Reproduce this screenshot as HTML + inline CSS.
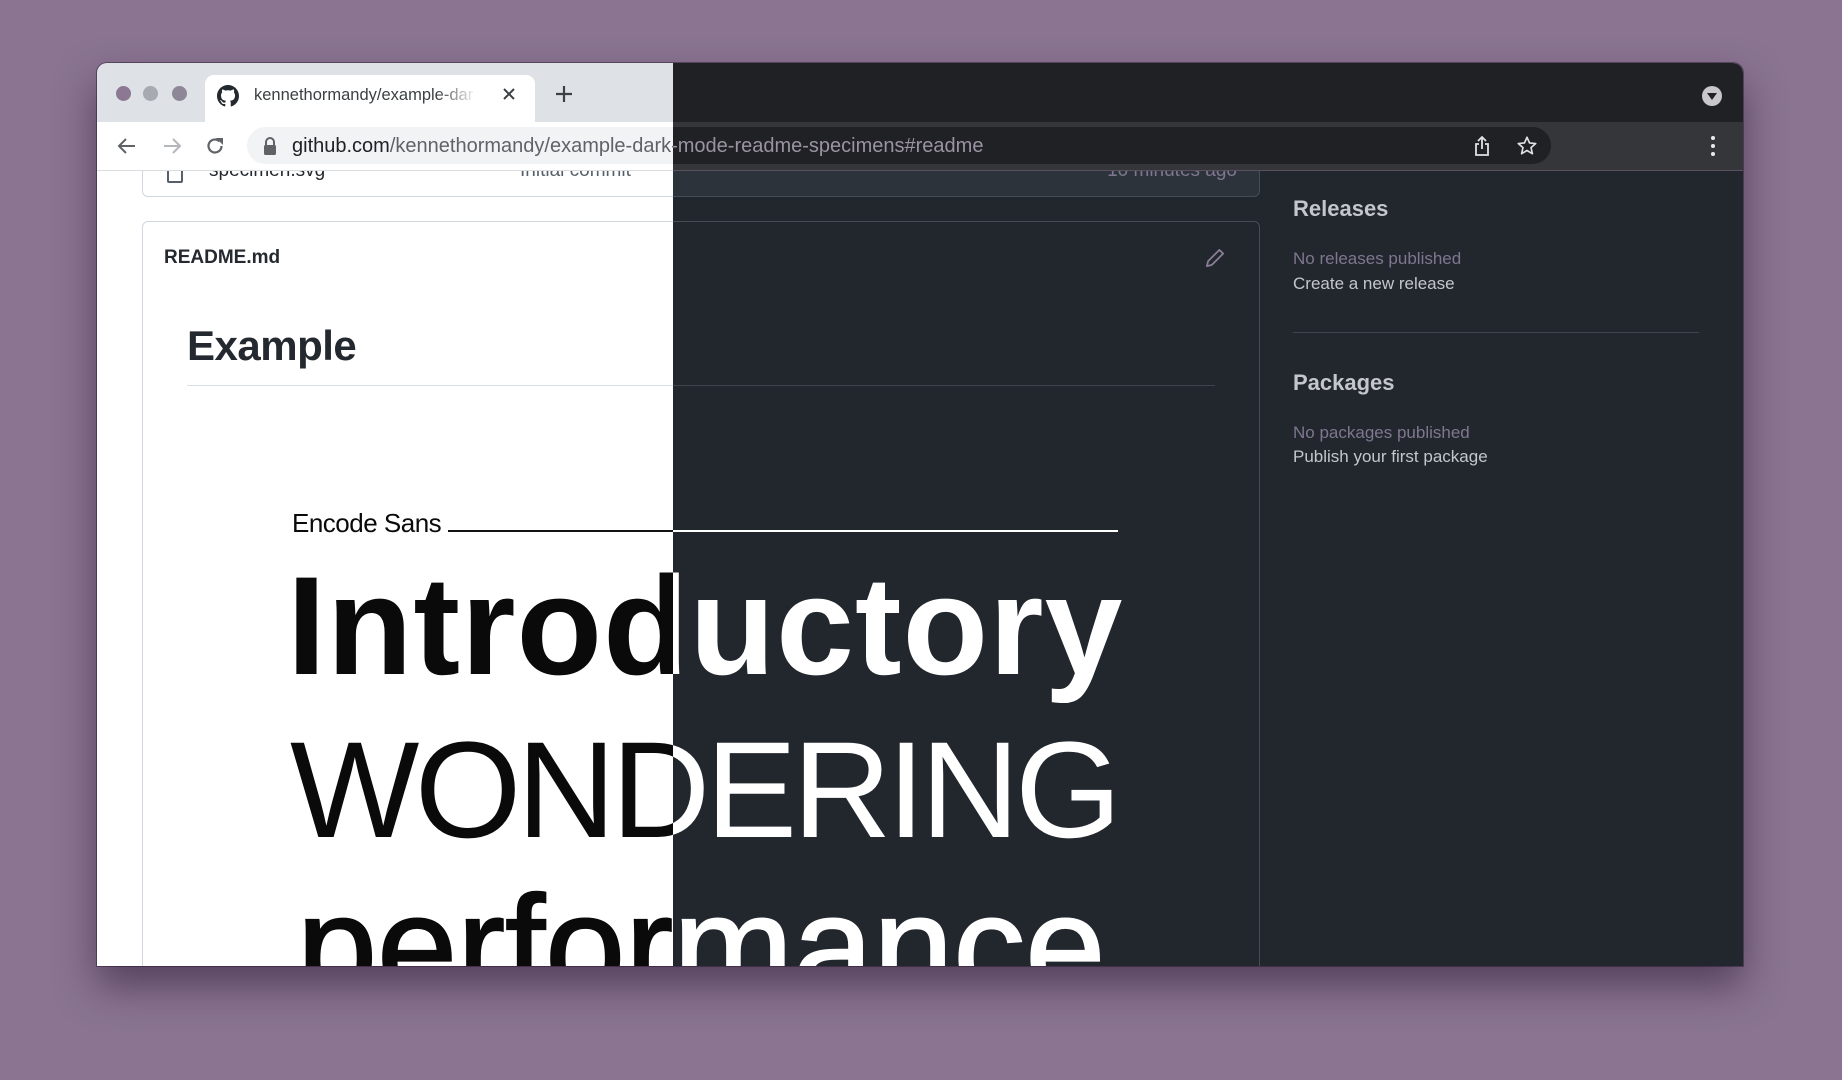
<!DOCTYPE html>
<html><head><meta charset="utf-8"><style>
*{margin:0;padding:0;box-sizing:border-box}
body{width:1842px;height:1080px;background:#8a7491;overflow:hidden;font-family:"Liberation Sans",sans-serif;position:relative}
#win{position:absolute;left:97px;top:63px;width:1646px;height:903px;border-radius:10px 10px 0 0;overflow:hidden;box-shadow:0 20px 40px rgba(40,20,50,.55),0 0 0 1px rgba(40,30,50,.5)}
.layer{position:absolute;left:0;top:0;width:1646px;height:903px;overflow:hidden}
.dark{clip-path:inset(0 0 0 576px)}
.abs{position:absolute;white-space:nowrap}
.tabbar{left:0;top:0;width:1646px;height:59px}
.toolbar{left:0;top:59px;width:1646px;height:49px}
.content{left:0;top:108px;width:1646px;height:795px;overflow:hidden}
.light .tabbar{background:#dee1e6}.dark .tabbar{background:#202124}
.light .toolbar{background:#fff;border-bottom:1px solid #dadce0}.dark .toolbar{background:#35363a;border-bottom:1px solid #5a5060}
.light .content{background:#fff}.dark .content{background:#22272e}
.omni{left:150px;top:5px;width:1304px;height:37px;border-radius:19px}
.light .omni{background:#f1f3f4}.dark .omni{background:#202124}
.url{left:195px;top:0;font-size:20px;line-height:49px}
.light .url{color:#5f6368}.light .url b{color:#202124;font-weight:normal}
.dark .url{color:#9b93a3}.dark .url b{color:#e8eaed;font-weight:normal}
.box{border-radius:6px}
.light .box{border:1px solid #d0d7de}.dark .box{border:1px solid #444c56}
.light .t{color:#24292f}.dark .t{color:#adbac7}
.light .m{color:#57606a}.dark .m{color:#7f7690}
.big{line-height:1}
.light .big{color:#0a0a0a}.dark .big{color:#fff}
.light .hr{background:#d8dee4}.dark .hr{background:#3d444d}
.light .rule{background:#111}.dark .rule{background:#fff}
</style></head><body>
<div id="win">
<!-- LIGHT -->
<div class="layer light">
 <div class="abs tabbar">
  <div class="abs" style="left:19px;top:23px;width:15px;height:15px;border-radius:50%;background:#8d7894"></div>
  <div class="abs" style="left:46px;top:23px;width:15px;height:15px;border-radius:50%;background:#a7aab0"></div>
  <div class="abs" style="left:75px;top:23px;width:15px;height:15px;border-radius:50%;background:#8e8797"></div>
  <div class="abs" style="left:108px;top:12px;width:330px;height:47px;background:#fff;border-radius:9px 9px 0 0"></div>
  <svg class="abs" style="left:120px;top:22px" width="22" height="22" viewBox="0 0 16 16"><path fill="#24292f" d="M8 0C3.580 0 0 3.58 0 8c0 3.54 2.29 6.53 5.47 7.59.4.07.55-.17.55-.38 0-.19-.01-.82-.01-1.490-2.010.37-2.53-.49-2.69-.94-.09-.23-.48-.94-.82-1.130-.28-.15-.68-.52-.01-.53.63-.01 1.08.58 1.23.82.72 1.21 1.87.87 2.33.66.07-.52.28-.87.51-1.07-1.78-.2-3.64-.89-3.64-3.95 0-.87.31-1.59.82-2.150-.08-.2-.36-1.02.08-2.12 0 0 .67-.21 2.2.82.64-.18 1.32-.27 2-.27.68 0 1.36.09 2 .27 1.53-1.04 2.2-.82 2.2-.82.44 1.1.16 1.92.08 2.12.51.56.82 1.27.82 2.15 0 3.07-1.87 3.75-3.65 3.95.29.25.54.73.54 1.48 0 1.07-.01 1.93-.01 2.2 0 .21.15.46.55.38A8.013 8.013 0 0016 8c0-4.42-3.58-8-8-8z"/></svg>
  <div class="abs" style="left:157px;top:21px;width:220px;overflow:hidden;font-size:16.5px;line-height:22px;color:#3c4043">kennethormandy/example-dark-mode</div>
  <div class="abs" style="left:340px;top:21px;width:40px;height:22px;background:linear-gradient(90deg,rgba(255,255,255,0),#fff)"></div>
  <svg class="abs" style="left:404px;top:23px" width="16" height="16" viewBox="0 0 16 16"><path d="M3 3L13 13M13 3L3 13" stroke="#3c4043" stroke-width="2"/></svg>
  <svg class="abs" style="left:458px;top:22px" width="18" height="18" viewBox="0 0 18 18"><path d="M9 1V17M1 9H17" stroke="#3c4043" stroke-width="2.2"/></svg>
 </div>
 <div class="abs toolbar">
  <svg class="abs" style="left:20px;top:14px" width="20" height="20" viewBox="0 0 20 20"><path d="M18 10H3M9 3L2 10L9 17" fill="none" stroke="#5f6368" stroke-width="2"/></svg>
  <svg class="abs" style="left:65px;top:14px" width="20" height="20" viewBox="0 0 20 20"><path d="M2 10H17M11 3L18 10L11 17" fill="none" stroke="#b4b7bb" stroke-width="2"/></svg>
  <svg class="abs" style="left:108px;top:14px" width="20" height="20" viewBox="0 0 20 20"><path d="M16.5 10A6.5 6.5 0 1 1 14.6 5.4" fill="none" stroke="#5f6368" stroke-width="2.2"/><path d="M11 2H18V9Z" fill="#5f6368"/></svg>
  <div class="abs omni"></div>
  <svg class="abs" style="left:166px;top:15px" width="14" height="18" viewBox="0 0 14 18"><path d="M3 8V5a4 4 0 0 1 8 0v3" fill="none" stroke="#5f6368" stroke-width="2"/><rect x="1" y="8" width="12" height="10" rx="1.5" fill="#5f6368"/></svg>
  <div class="abs url"><b>github.com</b>/kennethormandy/example-dark-mode-readme-specimens#readme</div>
 </div>
 <div class="abs content">
  <div class="abs box" style="left:45px;top:-60px;width:1118px;height:86px"></div>
  <div class="abs" style="left:70px;top:-6px;width:16px;height:18px;border:2px solid #57606a;border-radius:2px"></div>
  <div class="abs t" style="left:112px;top:-12px;font-size:19px;line-height:24px">specimen.svg</div>
  <div class="abs m" style="left:423px;top:-12px;font-size:19px;line-height:24px">Initial commit</div>
  <div class="abs box" style="left:45px;top:50px;width:1118px;height:800px"></div>
  <div class="abs t" style="left:67px;top:75px;font-size:19px;line-height:24px;font-weight:bold">README.md</div>
  <div class="abs t" style="left:90px;top:149px;font-size:42px;line-height:52px;font-weight:bold;letter-spacing:-.5px">Example</div>
  <div class="abs hr" style="left:90px;top:214px;width:1028px;height:1px"></div>
  <div class="abs big" style="left:195px;top:339px;font-size:26px;letter-spacing:-.5px">Encode Sans</div>
  <div class="abs rule" style="left:351px;top:359px;width:670px;height:2px"></div>
  <div class="abs big" style="left:190px;top:385px;font-size:140px;font-weight:bold;letter-spacing:1px">Introductory</div>
  <div class="abs big" style="left:193px;top:551px;font-size:137px;letter-spacing:-4.5px">WONDERING</div>
  <div class="abs big" style="left:200px;top:704px;font-size:144px;-webkit-text-stroke:2px currentColor;letter-spacing:0">performance</div>
 </div>
</div>
<!-- DARK -->
<div class="layer dark">
 <div class="abs tabbar">
  <div class="abs" style="left:1605px;top:23px;width:20px;height:20px;border-radius:50%;background:#c9c6cd"></div>
  <svg class="abs" style="left:1609px;top:29px" width="12" height="9" viewBox="0 0 12 9"><path d="M1 1H11L6 8Z" fill="#202124"/></svg>
 </div>
 <div class="abs toolbar">
  <div class="abs omni"></div>
  <div class="abs url"><b>github.com</b>/kennethormandy/example-dark-mode-readme-specimens#readme</div>
  <svg class="abs" style="left:1376px;top:13px" width="18" height="22" viewBox="0 0 18 22"><path d="M9 14V2M5 6L9 2L13 6M6 9H3V20H15V9H12" fill="none" stroke="#dfe1e5" stroke-width="1.8"/></svg>
  <svg class="abs" style="left:1419px;top:13px" width="22" height="22" viewBox="0 0 24 24"><path d="M12 2.5l2.8 6.2 6.7.6-5.1 4.5 1.5 6.6L12 16.9l-5.9 3.5 1.5-6.6-5.1-4.5 6.7-.6z" fill="none" stroke="#dfe1e5" stroke-width="1.8" stroke-linejoin="round"/></svg>
  <div class="abs" style="left:1614px;top:14px;width:4px;height:4px;border-radius:50%;background:#e8eaed"></div>
  <div class="abs" style="left:1614px;top:22px;width:4px;height:4px;border-radius:50%;background:#e8eaed"></div>
  <div class="abs" style="left:1614px;top:30px;width:4px;height:4px;border-radius:50%;background:#e8eaed"></div>
 </div>
 <div class="abs content">
  <div class="abs box" style="left:45px;top:-60px;width:1118px;height:86px;background:#2d333b"></div>
  <div class="abs m" style="left:1140px;top:-12px;font-size:19px;line-height:24px;transform:translateX(-100%)">10 minutes ago</div>
  <div class="abs box" style="left:45px;top:50px;width:1118px;height:800px"></div>
  <svg class="abs" style="left:1108px;top:77px" width="20" height="20" viewBox="0 0 16 16"><path d="M11.5 1.5l3 3-9 9-4 1 1-4z" fill="none" stroke="#8a7f96" stroke-width="1.4" stroke-linejoin="round"/></svg>
  <div class="abs hr" style="left:90px;top:214px;width:1028px;height:1px"></div>
  <div class="abs rule" style="left:351px;top:359px;width:670px;height:2px"></div>
  <div class="abs big" style="left:190px;top:385px;font-size:140px;font-weight:bold;letter-spacing:1px">Introductory</div>
  <div class="abs big" style="left:193px;top:551px;font-size:137px;letter-spacing:-4.5px">WONDERING</div>
  <div class="abs big" style="left:200px;top:704px;font-size:144px;-webkit-text-stroke:2px currentColor;letter-spacing:0">performance</div>
  <div class="abs" style="left:1196px;top:25px;font-size:22px;line-height:26px;font-weight:bold;color:#c3c6cc">Releases</div>
  <div class="abs m" style="left:1196px;top:77px;font-size:17px;line-height:22px">No releases published</div>
  <div class="abs t" style="left:1196px;top:102px;font-size:17px;line-height:22px;color:#c3c6cc">Create a new release</div>
  <div class="abs hr" style="left:1196px;top:161px;width:406px;height:1px"></div>
  <div class="abs" style="left:1196px;top:199px;font-size:22px;line-height:26px;font-weight:bold;color:#c3c6cc">Packages</div>
  <div class="abs m" style="left:1196px;top:251px;font-size:17px;line-height:22px">No packages published</div>
  <div class="abs t" style="left:1196px;top:275px;font-size:17px;line-height:22px;color:#c3c6cc">Publish your first package</div>
 </div>
</div>
</div>
</body></html>
